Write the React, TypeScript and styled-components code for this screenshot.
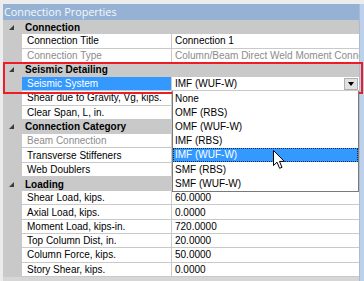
import React from "react";
import styled, { createGlobalStyle, css } from "styled-components";

const Global = createGlobalStyle`
  html, body { margin: 0; padding: 0; background: #eeeeee; }
  body { width: 364px; height: 281px; overflow: hidden; font-family: "Liberation Sans", Arial, sans-serif; }
  * { box-sizing: border-box; }
`;

const Frame = styled.div`
  position: relative;
  width: 364px;
  height: 281px;
  background: #ececec;
  padding: 4px 0 0 3px;
  display: flex;
  overflow: hidden;
`;

const Panel = styled.div`
  width: 356px;
  display: flex;
  flex-direction: column;
  background: #c9c9c9;
`;

const EdgeStrip = styled.div`
  width: 5px;
  background: #bdd1ea;
  border-left: 1px solid #a9bcd4;
`;

const TitleBar = styled.div`
  height: 16px;
  background: #95b2d5;
  color: #f6f8fb;
  font-family: "Open Sans", "Liberation Sans", sans-serif;
  font-size: 10.8px;
  line-height: 16px;
  padding-left: 1px;
  white-space: nowrap;
`;

const Grid = styled.div`
  display: flex;
  flex-direction: column;
  flex: 1;
`;

const ROW_H = "14.28px";

const CategoryRow = styled.div`
  height: ${ROW_H};
  display: grid;
  grid-template-columns: 19px 1fr;
  align-items: center;
  background: #c9c9c9;
  font-weight: bold;
  font-size: 10px;
  color: #000;
`;

const Expander = styled.span`
  justify-self: center;
  width: 0;
  height: 0;
  border-left: 5px solid transparent;
  border-bottom: 5px solid #3c3c3c;
  margin-left: -2px;
`;

const CategoryName = styled.span`
  padding-left: 3px;
  white-space: nowrap;
`;

const PropRow = styled.div`
  height: ${ROW_H};
  display: grid;
  grid-template-columns: 19px 149px 1fr;
  border-bottom: 1px solid #c9c9c9;
  font-size: 10px;
`;

const Margin = styled.div`
  background: #c9c9c9;
`;

const Label = styled.div<{ $selected?: boolean; $muted?: boolean }>`
  background: #ffffff;
  color: ${(p) => (p.$muted ? "#8c8c8c" : "#000")};
  padding-left: 5px;
  display: flex;
  align-items: center;
  white-space: nowrap;
  overflow: hidden;
  ${(p) =>
    p.$selected &&
    css`
      background: #3399ff;
      color: #ffffff;
    `}
`;

const Value = styled.div<{ $muted?: boolean }>`
  background: #ffffff;
  border-left: 1px solid #c9c9c9;
  color: ${(p) => (p.$muted ? "#8c8c8c" : "#000")};
  padding-left: 3px;
  display: flex;
  align-items: center;
  white-space: nowrap;
  overflow: hidden;
  min-width: 0;
`;

const EditValue = styled(Value)`
  justify-content: space-between;
  padding-right: 1px;
`;

const DropButton = styled.div`
  width: 14px;
  height: 12px;
  background: #e2e2e2;
  border: 1px solid #b0b0b0;
  display: flex;
  align-items: center;
  justify-content: center;
  &::after {
    content: "";
    width: 0;
    height: 0;
    border-left: 3.5px solid transparent;
    border-right: 3.5px solid transparent;
    border-top: 4px solid #000;
    margin-top: 1px;
  }
`;

const BottomStrip = styled.div`
  flex: 1;
  background: #d6d6d6;
`;

const Highlight = styled.div`
  position: absolute;
  left: 3px;
  top: 62px;
  width: 360px;
  height: 32px;
  border: 2px solid #ee1c24;
  pointer-events: none;
`;

const DropList = styled.div`
  position: absolute;
  left: 172px;
  top: 91px;
  width: 187px;
  height: 101px;
  background: #ffffff;
  border: 1px solid #7a7a7a;
  border-top: none;
  display: flex;
  flex-direction: column;
  font-size: 10px;
`;

const ListItem = styled.div<{ $selected?: boolean }>`
  height: 14.2px;
  display: flex;
  align-items: center;
  padding-left: 2px;
  color: #000;
  white-space: nowrap;
  ${(p) =>
    p.$selected &&
    css`
      background: #3399ff;
      color: #ffffff;
      outline: 1px dotted #0a2a55;
      outline-offset: -1px;
    `}
`;

const Cursor = styled.svg`
  position: absolute;
  left: 273px;
  top: 150px;
`;

type Item =
  | { kind: "cat"; name: string }
  | { kind: "prop"; label: string; value?: string; muted?: boolean; selected?: boolean; edit?: boolean };

const items: Item[] = [
  { kind: "cat", name: "Connection" },
  { kind: "prop", label: "Connection Title", value: "Connection 1" },
  { kind: "prop", label: "Connection Type", value: "Column/Beam Direct Weld Moment Connection", muted: true },
  { kind: "cat", name: "Seismic Detailing" },
  { kind: "prop", label: "Seismic System", value: "IMF (WUF-W)", selected: true, edit: true },
  { kind: "prop", label: "Shear due to Gravity, Vg, kips.", value: "" },
  { kind: "prop", label: "Clear Span, L, in.", value: "" },
  { kind: "cat", name: "Connection Category" },
  { kind: "prop", label: "Beam Connection", value: "", muted: true },
  { kind: "prop", label: "Transverse Stiffeners", value: "" },
  { kind: "prop", label: "Web Doublers", value: "" },
  { kind: "cat", name: "Loading" },
  { kind: "prop", label: "Shear Load, kips.", value: "60.0000" },
  { kind: "prop", label: "Axial Load, kips.", value: "0.0000" },
  { kind: "prop", label: "Moment Load, kips-in.", value: "720.0000" },
  { kind: "prop", label: "Top Column Dist, in.", value: "20.0000" },
  { kind: "prop", label: "Column Force, kips.", value: "50.0000" },
  { kind: "prop", label: "Story Shear, kips.", value: "0.0000" },
];

const options = ["None", "OMF (RBS)", "OMF (WUF-W)", "IMF (RBS)", "IMF (WUF-W)", "SMF (RBS)", "SMF (WUF-W)"];

export default function App() {
  return (
    <>
      <Global />
      <Frame>
        <Panel>
          <TitleBar>Connection Properties</TitleBar>
          <Grid>
            {items.map((it, i) =>
              it.kind === "cat" ? (
                <CategoryRow key={i}>
                  <Expander />
                  <CategoryName>{it.name}</CategoryName>
                </CategoryRow>
              ) : (
                <PropRow key={i}>
                  <Margin />
                  <Label $selected={it.selected} $muted={it.muted}>
                    {it.label}
                  </Label>
                  {it.edit ? (
                    <EditValue>
                      <span>{it.value}</span>
                      <DropButton />
                    </EditValue>
                  ) : (
                    <Value $muted={it.muted}>{it.value}</Value>
                  )}
                </PropRow>
              )
            )}
            <BottomStrip />
          </Grid>
        </Panel>
        <EdgeStrip />
        <Highlight />
        <DropList>
          {options.map((o) => (
            <ListItem key={o} $selected={o === "IMF (WUF-W)"}>
              {o}
            </ListItem>
          ))}
        </DropList>
        <Cursor width="13" height="20" viewBox="0 0 13 20">
          <path
            d="M0.5 0.5 L0.5 15.5 L4 12.2 L6.6 18.3 L9 17.3 L6.5 11.4 L11.3 11.4 Z"
            fill="#ffffff"
            stroke="#000000"
            strokeWidth="1"
            strokeLinejoin="miter"
          />
        </Cursor>
      </Frame>
    </>
  );
}
